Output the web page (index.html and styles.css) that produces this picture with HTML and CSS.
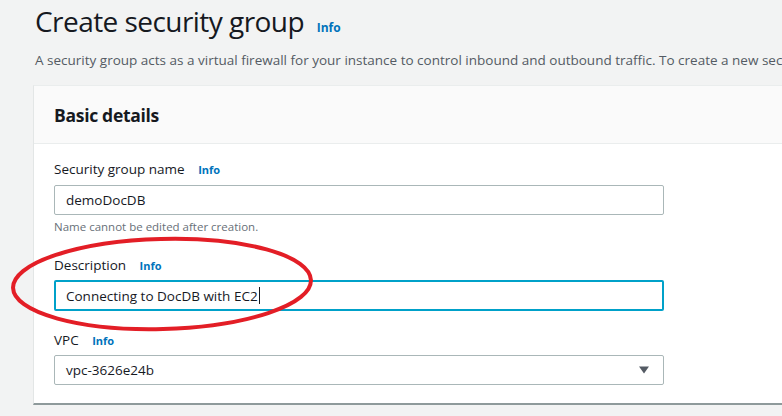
FILE: index.html
```html
<!DOCTYPE html>
<html>
<head>
<meta charset="utf-8">
<link rel="stylesheet" href="styles.css">
</head>
<body>
<div class="page">
  <div class="head">
    <h1 class="title">Create security group <a class="info info-title">Info</a></h1>
    <p class="lead">A security group acts as a virtual firewall for your instance to control inbound and outbound traffic. To create a new security group, complete the fields below.</p>
  </div>
  <div class="panel">
    <div class="panel-head"><h2 class="panel-title">Basic details</h2></div>
    <div class="panel-body">
      <div class="field">
        <div class="label">Security group name <a class="info">Info</a></div>
        <div class="input">demoDocDB</div>
        <div class="hint">Name cannot be edited after creation.</div>
      </div>
      <div class="field">
        <div class="label">Description <a class="info">Info</a></div>
        <div class="input focused">Connecting to DocDB with EC2<span class="cursor"></span></div>
      </div>
      <div class="field field-vpc">
        <div class="label">VPC <a class="info">Info</a></div>
        <div class="input select">vpc-3626e24b<svg class="caret" width="12" height="8" viewBox="0 0 12 8"><path d="M1 0.5 L11 0.5 L6 7.5 Z" fill="#545b64"/></svg></div>
      </div>
    </div>
  </div>
  <svg class="annot" width="782" height="416" viewBox="0 0 782 416">
    <ellipse cx="162" cy="284" rx="149" ry="45" fill="none" stroke="#e31e26" stroke-width="4" transform="rotate(-1.5 162 284)"/>
  </svg>
</div>
</body>
</html>
```

FILE: styles.css
```css
html, body {
  margin: 0;
  padding: 0;
  background: #f2f3f3;
  overflow: hidden;
}
.page {
  position: relative;
  width: 782px;
  height: 416px;
  overflow: hidden;
  font-family: "Open Sans", "Noto Sans", sans-serif;
  color: #16191f;
}
.head {
  padding: 0 0 0 35px;
}
.title {
  margin: 0;
  padding-top: 2px;
  font-size: 28px;
  line-height: 38px;
  font-weight: 400;
  letter-spacing: -0.55px;
  white-space: nowrap;
  color: #16191f;
}
.info {
  color: #0073bb;
  font-weight: 700;
  font-size: 11px;
  margin-left: 10px;
  letter-spacing: 0;
}
.info-title {
  font-size: 12px;
  margin-left: 6px;
}
.lead {
  margin: 3px 0 0 0;
  font-size: 13.5px;
  line-height: 20px;
  color: #545b64;
  white-space: nowrap;
}
.panel {
  margin: 15px 0 0 33px;
  width: 800px;
  background: #fff;
  border-left: 1px solid #e3e6e6;
  border-top: 1px solid #eaeded;
  border-bottom: 2px solid #8e9a9b;
}
.panel-head {
  background: #fafafa;
  height: 57px;
  border-bottom: 1px solid #eaeded;
  display: flex;
  align-items: center;
  padding-left: 20px;
}
.panel-title {
  margin: 0;
  font-size: 17.5px;
  font-weight: 700;
  letter-spacing: -0.3px;
  color: #16191f;
}
.panel-body {
  padding: 15px 0 18px 20px;
  display: flex;
  flex-direction: column;
  gap: 20px;
}
.field {
  display: flex;
  flex-direction: column;
}
.field-vpc {
  margin-top: -1px;
}
.label {
  font-size: 13.5px;
  line-height: 20px;
  margin-bottom: 5px;
}
.field + .field .label {
  margin-bottom: 4px;
}
.input {
  box-sizing: border-box;
  width: 610px;
  height: 30px;
  border: 1px solid #aab7b8;
  border-radius: 2px;
  display: flex;
  align-items: center;
  padding-left: 11px;
  font-size: 13.5px;
  color: #16191f;
}
.input.focused {
  border: 2px solid #00a1c9;
  padding-left: 10px;
  height: 31px;
}
.cursor {
  display: inline-block;
  width: 1px;
  height: 17px;
  background: #16191f;
  margin-left: 1px;
}
.select {
  justify-content: space-between;
  padding-right: 13px;
}
.hint {
  font-size: 11.5px;
  line-height: 16px;
  color: #687078;
  margin-top: 4px;
}
.annot {
  position: absolute;
  left: 0;
  top: 0;
  pointer-events: none;
}
```
